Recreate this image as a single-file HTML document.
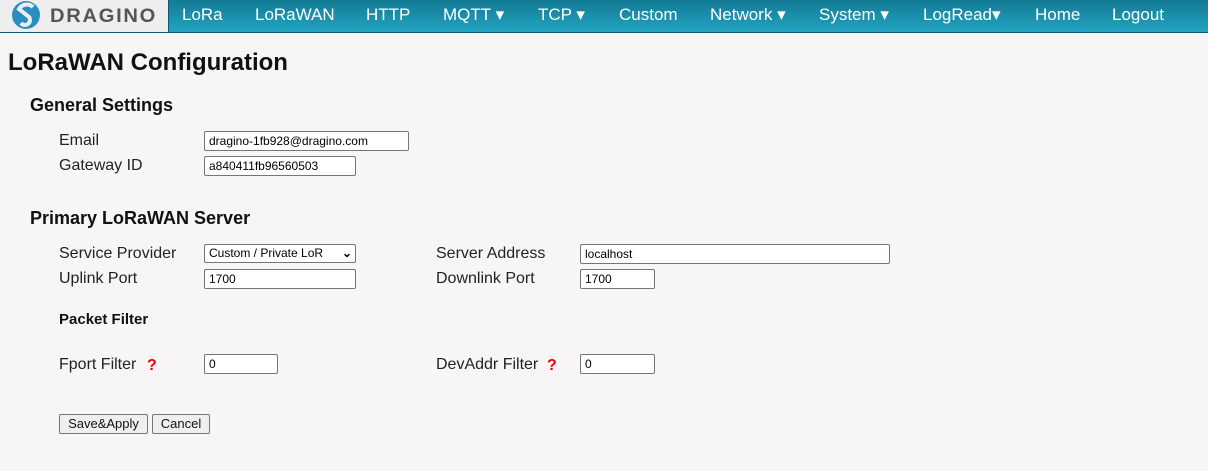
<!DOCTYPE html>
<html><head><style>
body{margin:0;background:#f8f5f6;font-family:"Liberation Sans",Arial,sans-serif;width:1208px;height:471px;overflow:hidden;position:relative;color:#222}
.nav{position:absolute;left:0;top:0;width:1208px;height:32px;background:linear-gradient(#137a94,#22a4c1);border-bottom:1px solid #0e5a6e}
.logo{position:absolute;left:0;top:0;width:168px;height:32px;background:#eeeeee;border-right:1px solid #0e5a6e}
.nav a{position:absolute;top:5px;color:#fff;font-size:17px;text-decoration:none}
.a{position:absolute;white-space:nowrap}
h1{position:absolute;left:8px;top:49px;margin:0;font-size:24px;color:#111}
h2{position:absolute;left:30px;margin:0;font-size:18px;color:#111}
.l{position:absolute;left:59px;font-size:16px;color:#222}
.l2{position:absolute;left:436px;font-size:16px;color:#222}
.i{position:absolute;height:18px;background:#fff;border:1px solid #767676;border-radius:2px;font-size:12px;line-height:18px;padding-left:4px;box-sizing:content-box;color:#000}
.q{color:#e00;font-weight:bold;font-size:16px;position:absolute}
.b{position:absolute;top:414px;height:18px;border:1px solid #767676;border-radius:2px;background:#efefef;font-size:13px;line-height:18px;text-align:center;color:#111}
</style></head><body>
<div class="nav">
<div class="logo">
<svg width="168" height="32" viewBox="0 0 168 32"><circle cx="26" cy="15" r="14" fill="#2a8fc0"/><path d="M33 7 A9 9 0 0 0 19 9 L29 17 A5 5 0 0 1 21 23" stroke="#eee" stroke-width="4" fill="none"/><text x="50" y="22" font-family="Liberation Sans" font-weight="bold" font-size="19" fill="#555" letter-spacing="1.6" textLength="107" lengthAdjust="spacingAndGlyphs">DRAGINO</text></svg>
</div>
<a style="left:182px">LoRa</a><a style="left:255px">LoRaWAN</a><a style="left:366px">HTTP</a><a style="left:443px">MQTT ▾</a><a style="left:538px">TCP ▾</a><a style="left:619px">Custom</a><a style="left:710px">Network ▾</a><a style="left:819px">System ▾</a><a style="left:923px">LogRead▾</a><a style="left:1035px">Home</a><a style="left:1112px">Logout</a>
</div>
<h1>LoRaWAN Configuration</h1>
<h2 style="top:95px">General Settings</h2>
<div class="l" style="top:132px">Email</div><div class="i" style="left:204px;top:131px;width:199px">dragino-1fb928@dragino.com</div>
<div class="l" style="top:157px">Gateway ID</div><div class="i" style="left:204px;top:156px;width:146px">a840411fb96560503</div>
<h2 style="top:208px">Primary LoRaWAN Server</h2>
<div class="l" style="top:245px">Service Provider</div><div class="i" style="left:204px;top:244px;width:146px;height:17px;line-height:17px">Custom / Private LoR<span style="position:absolute;right:3px;font-weight:bold">⌄</span></div>
<div class="l2" style="top:245px">Server Address</div><div class="i" style="left:580px;top:244px;width:304px">localhost</div>
<div class="l" style="top:270px">Uplink Port</div><div class="i" style="left:204px;top:269px;width:146px">1700</div>
<div class="l2" style="top:270px">Downlink Port</div><div class="i" style="left:580px;top:269px;width:69px">1700</div>
<div class="a" style="left:59px;top:311px;font-weight:bold;font-size:15px;color:#111">Packet Filter</div>
<div class="l" style="top:356px">Fport Filter</div><span class="q" style="left:147px;top:357px">?</span><div class="i" style="left:204px;top:354px;width:68px">0</div>
<div class="l2" style="top:356px">DevAddr Filter</div><span class="q" style="left:547px;top:357px">?</span><div class="i" style="left:580px;top:354px;width:69px">0</div>
<div class="b" style="left:59px;width:87px">Save&amp;Apply</div>
<div class="b" style="left:152px;width:56px">Cancel</div>
</body></html>
